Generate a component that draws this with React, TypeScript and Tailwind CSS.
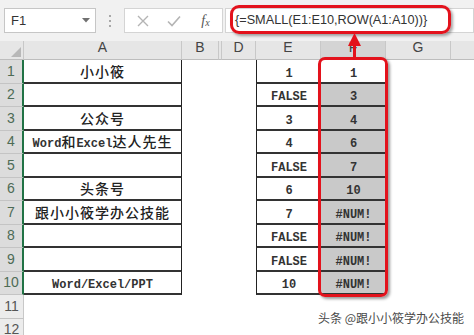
import React from "react";

const CJK = /([\u3000-\u9fff\uff00-\uffef]+)/;

function Txt({ s }: { s: string }) {
  const parts = s.split(CJK).filter((p) => p.length > 0);
  return (
    <span className="whitespace-nowrap">
      {parts.map((p, i) =>
        CJK.test(p) ? (
          <span
            key={i}
            className="font-['Noto_Sans_CJK_SC',sans-serif] text-[14px] font-medium tracking-[1px] text-[#222]"
          >
            {p}
          </span>
        ) : (
          <span
            key={i}
            className="font-['Liberation_Mono',monospace] text-[12px] font-bold text-[#333]"
          >
            {p}
          </span>
        )
      )}
    </span>
  );
}

const colA = ["小小筱", "", "公众号", "Word和Excel达人先生", "", "头条号", "跟小小筱学办公技能", "", "", "Word/Excel/PPT"];
const colE = ["1", "FALSE", "3", "4", "FALSE", "6", "7", "FALSE", "FALSE", "10"];
const colF = ["1", "3", "4", "6", "7", "10", "#NUM!", "#NUM!", "#NUM!", "#NUM!"];

function HeaderCell({ w, label, dark }: { w: string; label: string; dark?: boolean }) {
  return (
    <div
      className={`${w} h-full shrink-0 flex items-end justify-center pb-[1px] border-r border-[#c8c8c8] border-b border-b-[#bdbdbd] font-['Liberation_Sans',sans-serif] text-[14px] text-[#444] ${
        dark ? "bg-[#d4d4d4]" : "bg-[#e6e6e6]"
      }`}
    >
      {label}
    </div>
  );
}

export default function App() {
  const rows = Array.from({ length: 12 }, (_, i) => i);
  return (
    <div className="relative w-[474px] h-[335px] overflow-hidden bg-white">
      {/* toolbar */}
      <div className="h-[41px] bg-[#f1f1f1] flex items-start pt-[8px]">
        <div className="ml-[4px] w-[92px] h-[25px] bg-white border border-[#c6c6c6] flex items-center justify-between pl-[6px] pr-[5px]">
          <span className="font-['Liberation_Sans',sans-serif] text-[13px] text-[#333]">F1</span>
          <svg width="8" height="5" viewBox="0 0 8 5">
            <polygon points="0,0 8,0 4,4.5" fill="#707070" />
          </svg>
        </div>
        <div className="w-[28px] h-[25px] flex flex-col items-center justify-center gap-[3px]">
          <div className="w-[2px] h-[2px] bg-[#a8a8a8]" />
          <div className="w-[2px] h-[2px] bg-[#a8a8a8]" />
          <div className="w-[2px] h-[2px] bg-[#a8a8a8]" />
        </div>
        <div className="w-[99px] h-[25px] bg-white border border-[#d4d4d4] flex items-center">
          <div className="w-[34px] flex justify-center pl-[2px]">
            <svg width="12" height="12" viewBox="0 0 12 12">
              <path d="M1 1 L11 11 M11 1 L1 11" stroke="#b4b4b4" strokeWidth="1.4" />
            </svg>
          </div>
          <div className="w-[30px] flex justify-center">
            <svg width="14" height="12" viewBox="0 0 14 12">
              <path d="M1 6.5 L5 10.5 L13 1.5" stroke="#b4b4b4" strokeWidth="1.6" fill="none" />
            </svg>
          </div>
          <div className="flex-1 flex justify-center font-['Liberation_Serif',serif] italic text-[14px] text-[#555] leading-none">
            f<span className="text-[10px] mt-[4px]">x</span>
          </div>
        </div>
        <div className="flex-1 ml-[2px] h-[25px] bg-white border border-[#d4d4d4] flex items-center pl-[9px] font-['Liberation_Sans',sans-serif] text-[12.7px] text-[#333]">
          {"{=SMALL(E1:E10,ROW(A1:A10))}"}
        </div>
      </div>

      {/* column headers */}
      <div className="h-[19px] flex">
        <div className="w-[24px] h-full shrink-0 bg-[#e6e6e6] border-r border-[#c8c8c8] border-b border-b-[#bdbdbd] flex items-end justify-end p-[2px]">
          <svg width="10" height="10" viewBox="0 0 10 10">
            <polygon points="10,0 10,10 0,10" fill="#b8b8b8" />
          </svg>
        </div>
        <HeaderCell w="w-[158px]" label="A" />
        <HeaderCell w="w-[37px]" label="B" />
        <div className="w-[3px] h-full shrink-0 bg-[#e6e6e6] border-r border-[#c8c8c8] border-b border-b-[#bdbdbd]" />
        <HeaderCell w="w-[34px]" label="D" />
        <HeaderCell w="w-[65px]" label="E" />
        <HeaderCell w="w-[65px]" label="F" dark />
        <HeaderCell w="w-[65px]" label="G" />
        <div className="flex-1 h-full bg-[#e6e6e6] border-b border-[#bdbdbd]" />
      </div>

      {/* rows */}
      {rows.map((i) => {
        const inTable = i < 10;
        return (
          <div key={i} className="h-[23.5px] flex">
            <div
              className={`w-[24px] h-full shrink-0 flex items-end justify-center pb-[1px] border-b border-[#c4c4c4] font-['Liberation_Sans',sans-serif] text-[14px] ${
                inTable
                  ? "bg-[#dcdcdc] text-[#4d6b55] border-r-2 border-r-[#217346]"
                  : "bg-[#ececec] text-[#555] border-r border-r-[#c8c8c8]"
              }`}
            >
              {i + 1}
            </div>
            <div
              className={`w-[158px] h-full shrink-0 flex items-center justify-center ${
                inTable ? "border-r border-r-[#222] border-b-2 border-b-[#333]" : ""
              }`}
            >
              {inTable && <Txt s={colA[i]} />}
            </div>
            <div className="w-[74px] h-full shrink-0" />
            <div
              className={`w-[65px] h-full shrink-0 flex items-center justify-center ${
                inTable ? "border-l border-l-[#222] border-b-2 border-b-[#333]" : ""
              }`}
            >
              {inTable && <Txt s={colE[i]} />}
            </div>
            <div
              className={`w-[65px] h-full shrink-0 flex items-center justify-center ${
                inTable ? `border-b-2 border-b-[#333] ${i === 0 ? "bg-white" : "bg-[#c9c9c9]"}` : ""
              }`}
            >
              {inTable && <Txt s={colF[i]} />}
            </div>
            <div className="flex-1 h-full" />
          </div>
        );
      })}

      {/* annotations */}
      <div className="absolute left-[230px] top-[5px] w-[221px] h-[29px] border-[3px] border-[#e3121c] rounded-[9px] shadow-[2px_2px_3px_rgba(0,0,0,0.35)]" />
      <div className="absolute left-[318px] top-[57px] w-[70px] h-[240px] border-[3px] border-[#e3121c] rounded-[7px] shadow-[2px_2px_3px_rgba(0,0,0,0.4)]" />
      <svg className="absolute left-[347px] top-[33px]" width="15" height="25" viewBox="0 0 15 25">
        <polygon points="7.5,0 1,13 14,13" fill="#e3121c" />
        <rect x="6" y="12" width="3" height="13" fill="#e3121c" />
      </svg>
      <div className="absolute left-[318px] top-[309px] font-['Noto_Sans_CJK_SC',sans-serif] text-[12px] text-[#4a4a4a] [text-shadow:0_0_2px_#fff]">
        头条 @跟小小筱学办公技能
      </div>
    </div>
  );
}
